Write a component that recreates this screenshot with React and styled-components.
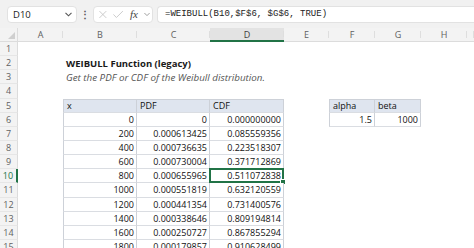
import React from 'react'
import styled, { createGlobalStyle } from 'styled-components'

const Global = createGlobalStyle`
    html, body {
        margin: 0;
        padding: 0;
        background: #fff;
    }
    body {
        font-family: "Open Sans", "Liberation Sans", sans-serif;
        width: 474px;
        height: 248px;
        overflow: hidden;
    }
`

const Window = styled.div`
    display: flex;
    flex-direction: column;
    width: 474px;
    height: 248px;
    overflow: hidden;
`

const FormulaBar = styled.div`
    display: flex;
    flex-shrink: 0;
    align-items: center;
    height: 28px;
    padding: 0 0 0 7px;
    background: #f1f1f1;
`

const Box = styled.div`
    display: flex;
    align-items: center;
    height: 17px;
    background: #fff;
    border: 1px solid #e2e2e2;
    border-radius: 4px;
    box-sizing: border-box;
`

const NameBox = styled(Box)`
    width: 70px;
    justify-content: space-between;
    padding: 0 4px 0 5px;
    font-size: 9.5px;
    color: #222;
`

const Dots = styled.div`
    width: 16px;
    display: flex;
    justify-content: center;
    color: #555;
    font-size: 10px;
    font-weight: bold;
`

const FxGroup = styled(Box)`
    width: 60px;
    gap: 6px;
    padding: 0 2px 0 5px;
`

const Fx = styled.span`
    font-family: "Liberation Serif", serif;
    font-style: italic;
    font-size: 11px;
    color: #444;
    margin-left: 1px;
`

const FormulaInput = styled(Box)`
    flex: 1;
    margin-left: 4px;
    border-right: none;
    border-radius: 4px 0 0 4px;
    padding-left: 7px;
    font-family: "Liberation Mono", monospace;
    font-size: 9px;
    color: #222;
    white-space: nowrap;
`

const Sheet = styled.div`
    display: grid;
    flex-shrink: 0;
    grid-template-columns: 18px 45px 74px 73px 74px 45px 46px 46px 46px 1fr;
    grid-template-rows: 14px;
    grid-auto-rows: 14.15px;
    font-family: "Open Sans", "Liberation Sans", sans-serif;
    font-size: 9px;
`

const Corner = styled.div`
    position: relative;
    background: #f3f3f3;
    border-bottom: 1px solid #dcdcdc;
    border-right: 1px solid #dcdcdc;
    box-sizing: border-box;
    &::after {
        content: "";
        position: absolute;
        right: 2px;
        bottom: 2px;
        border-left: 7px solid transparent;
        border-bottom: 7px solid #cfcfcf;
    }
`

const ColHeader = styled.div`
    display: flex;
    align-items: center;
    justify-content: center;
    background: ${p => (p.$active ? '#e3e3e3' : '#f3f3f3')};
    color: ${p => (p.$active ? '#3d3d3d' : '#616161')};
    font-size: 9px;
    box-sizing: border-box;
    border-bottom: ${p => (p.$active ? '2px solid #217346' : '1px solid #dcdcdc')};
    position: relative;
    &::after {
        content: "";
        position: absolute;
        right: 0;
        top: 3px;
        bottom: 3px;
        width: 1px;
        background: #dedede;
    }
`

const RowHeader = styled.div`
    display: flex;
    align-items: center;
    justify-content: center;
    background: #f3f3f3;
    color: ${p => (p.$active ? '#217346' : '#616161')};
    font-size: 9px;
    box-sizing: border-box;
    border-right: ${p => (p.$active ? '2px solid #217346' : '1px solid #dcdcdc')};
    border-bottom: 1px solid #e6e6e6;
`

const Cell = styled.div`
    position: relative;
    display: flex;
    align-items: center;
    justify-content: ${p => (p.$right ? 'flex-end' : 'flex-start')};
    padding: 0 2px 0 3px;
    box-sizing: border-box;
    white-space: nowrap;
    color: #111;
    background: ${p => (p.$head ? '#dfe5ef' : p.$table ? '#fff' : 'transparent')};
    border-right: ${p => (p.$table ? '1px solid #cdd1d8' : 'none')};
    border-left: ${p => (p.$first ? '1px solid #cdd1d8' : 'none')};
    border-bottom: ${p => (p.$table ? '1px solid #dadde2' : 'none')};
    border-top: ${p => (p.$head ? '1px solid #cdd1d8' : 'none')};
    min-width: 0;
`

const Title = styled.span`
    font-weight: 700;
    font-size: 9.5px;
    color: #1a1a1a;
`

const Subtitle = styled.span`
    font-style: italic;
    font-size: 9.8px;
    color: #555;
`

const Selection = styled.div`
    position: absolute;
    inset: -1px -1px -1px -1px;
    border: 2px solid #217346;
    pointer-events: none;
    &::after {
        content: "";
        position: absolute;
        right: -4px;
        bottom: -4px;
        width: 4px;
        height: 4px;
        background: #217346;
        border: 1px solid #fff;
    }
`

const Cross = () => (
    <svg width="9" height="9" viewBox="0 0 9 9">
        <path d="M0.5 0.5 L8.5 8.5 M8.5 0.5 L0.5 8.5" stroke="#c4c4c4" strokeWidth="1" fill="none" />
    </svg>
)

const Check = () => (
    <svg width="12" height="9" viewBox="0 0 12 9">
        <path d="M0.5 4.5 L4 8 L11.5 0.5" stroke="#c4c4c4" strokeWidth="1" fill="none" />
    </svg>
)

const Chevron = ({ color = '#555' }) => (
    <svg width="7" height="5" viewBox="0 0 7 5">
        <path d="M0.5 0.8 L3.5 3.8 L6.5 0.8" stroke={color} strokeWidth="1.1" fill="none" />
    </svg>
)

const cols = ['A', 'B', 'C', 'D', 'E', 'F', 'G', 'H', '']

const data = [
    ['0', '0', '0.000000000'],
    ['200', '0.000613425', '0.085559356'],
    ['400', '0.000736635', '0.223518307'],
    ['600', '0.000730004', '0.371712869'],
    ['800', '0.000655965', '0.511072838'],
    ['1000', '0.000551819', '0.632120559'],
    ['1200', '0.000441354', '0.731400576'],
    ['1400', '0.000338646', '0.809194814'],
    ['1600', '0.000250727', '0.867855294'],
    ['1800', '0.000179857', '0.910628499'],
]

function cellFor(row, col) {
    // col index: 0=A .. 8=beyond H
    if (row === 2 && col === 1) return <Cell><Title>WEIBULL Function (legacy)</Title></Cell>
    if (row === 3 && col === 1) return <Cell><Subtitle>Get the PDF or CDF of the Weibull distribution.</Subtitle></Cell>
    if (row === 5 && col >= 1 && col <= 3) {
        return <Cell $head $table $first={col === 1}>{['x', 'PDF', 'CDF'][col - 1]}</Cell>
    }
    if (row >= 6 && col >= 1 && col <= 3) {
        const v = data[row - 6] ? data[row - 6][col - 1] : ''
        return (
            <Cell $table $right $first={col === 1}>
                {v}
                {row === 10 && col === 3 && <Selection />}
            </Cell>
        )
    }
    if (row === 5 && (col === 5 || col === 6)) {
        return <Cell $head $table $first={col === 5}>{col === 5 ? 'alpha' : 'beta'}</Cell>
    }
    if (row === 6 && (col === 5 || col === 6)) {
        return <Cell $table $right $first={col === 5}>{col === 5 ? '1.5' : '1000'}</Cell>
    }
    return <Cell />
}

export default function App() {
    const rows = Array.from({ length: 15 }, (_, i) => i + 1)
    return (
        <Window>
            <Global />
            <FormulaBar>
                <NameBox>
                    <span>D10</span>
                    <Chevron />
                </NameBox>
                <Dots>⋮</Dots>
                <FxGroup>
                    <Cross />
                    <Check />
                    <Fx>fx</Fx>
                    <Chevron color="#999" />
                </FxGroup>
                <FormulaInput>=WEIBULL(B10,$F$6, $G$6, TRUE)</FormulaInput>
            </FormulaBar>
            <Sheet>
                <Corner />
                {cols.map((c, i) => (
                    <ColHeader key={i} $active={c === 'D'}>{c}</ColHeader>
                ))}
                {rows.map(r => (
                    <React.Fragment key={r}>
                        <RowHeader $active={r === 10}>{r}</RowHeader>
                        {cols.map((_, ci) => (
                            <React.Fragment key={ci}>{cellFor(r, ci)}</React.Fragment>
                        ))}
                    </React.Fragment>
                ))}
            </Sheet>
        </Window>
    )
}
